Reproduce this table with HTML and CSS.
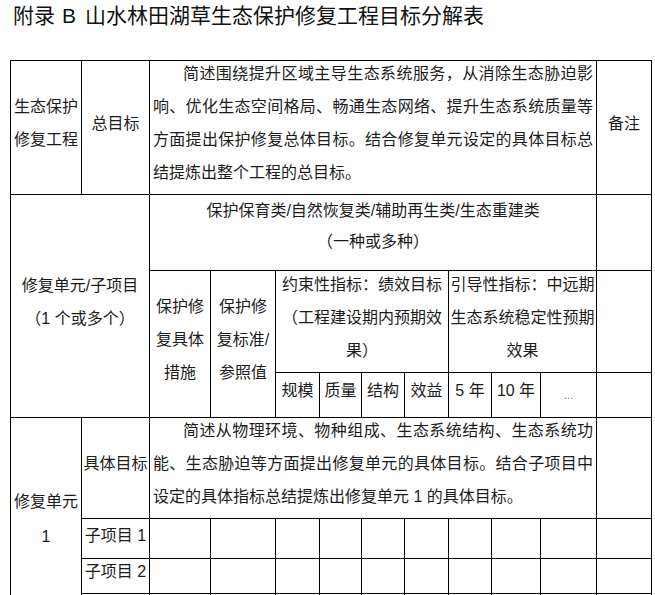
FILE: index.html
```html
<!DOCTYPE html>
<html lang="zh-CN">
<head>
<meta charset="utf-8">
<title>附录 B 山水林田湖草生态保护修复工程目标分解表</title>
<link rel="stylesheet" href="styles.css">
</head>
<body>
<div class="page">
  <h1 class="title">附录<span class="latin">B</span>山水林田湖草生态保护修复工程目标分解表</h1>
  <table class="grid">
    <colgroup>
      <col class="w71"><col class="w68"><col class="w61"><col class="w65">
      <col class="w44"><col class="w42"><col class="w43"><col class="w44">
      <col class="w43"><col class="w49"><col class="w56"><col class="w55">
    </colgroup>
    <tr class="r1">
      <td class="lift">生态保护<br>修复工程</td>
      <td class="lift">总目标</td>
      <td colspan="9" class="para"><div class="in indent">简述围绕提升区域主导生态系统服务，从消除生态胁迫影响、优化生态空间格局、畅通生态网络、提升生态系统质量等方面提出保护修复总体目标。结合修复单元设定的具体目标总结提炼出整个工程的总目标。</div></td>
      <td class="lift">备注</td>
    </tr>
    <tr class="r2">
      <td colspan="2" rowspan="3" class="lift">修复单元/子项目<br>（1 个或多个）</td>
      <td colspan="9" class="top">保护保育类/自然恢复类/辅助再生类/生态重建类<br>（一种或多种）</td>
      <td></td>
    </tr>
    <tr class="r3">
      <td rowspan="2" class="lift">保护修<br>复具体<br>措施</td>
      <td rowspan="2" class="lift">保护修<br>复标准/<br>参照值</td>
      <td colspan="4"><div class="in">约束性指标：绩效目标<br>（工程建设期内预期效<br>果）</div></td>
      <td colspan="3"><div class="in">引导性指标：中远期<br>生态系统稳定性预期<br>效果</div></td>
      <td></td>
    </tr>
    <tr class="r4">
      <td class="lift">规模</td><td class="lift">质量</td><td class="lift">结构</td><td class="lift">效益</td>
      <td class="lift">5 年</td><td class="lift">10 年</td><td class="dots">…</td><td></td>
    </tr>
    <tr class="r5">
      <td rowspan="4" class="lift unit">修复单元<br>1</td>
      <td class="lift">具体目标</td>
      <td colspan="9" class="para"><div class="in indent">简述从物理环境、物种组成、生态系统结构、生态系统功能、生态胁迫等方面提出修复单元的具体目标。结合子项目中设定的具体指标总结提炼出修复单元 1 的具体目标。</div></td>
      <td></td>
    </tr>
    <tr class="r6">
      <td class="sub">子项目 1</td>
      <td></td><td></td><td></td><td></td><td></td><td></td><td></td><td></td><td></td><td></td>
    </tr>
    <tr class="r7">
      <td class="sub">子项目 2</td>
      <td></td><td></td><td></td><td></td><td></td><td></td><td></td><td></td><td></td><td></td>
    </tr>
    <tr class="r8">
      <td></td>
      <td></td><td></td><td></td><td></td><td></td><td></td><td></td><td></td><td></td><td></td>
    </tr>
  </table>
</div>
</body>
</html>
```
FILE: styles.css
```css
html, body {
  margin: 0;
  padding: 0;
  background: #ffffff;
}
body {
  font-family: "Liberation Sans", "Noto Sans CJK SC", sans-serif;
  color: #1c1c1c;
}
.page {
  padding-left: 10px;
}
.title {
  margin: 0;
  height: 60px;
  padding-left: 3px;
  font-size: 21px;
  line-height: 32px;
  font-weight: 400;
  color: #111;
}
.title .latin {
  margin: 0 9px 0 7px;
}
.grid {
  border-collapse: collapse;
  table-layout: fixed;
  width: 641px;
}
.grid td {
  border: 1px solid #000;
  padding: 0;
  font-size: 16px;
  line-height: 33px;
  text-align: center;
  vertical-align: middle;
  white-space: nowrap;
}
.grid td.lift {
  padding-bottom: 9px;
}
.grid td.unit {
  line-height: 35px;
}
.grid td.top {
  vertical-align: top;
  line-height: 31px;
}
.grid td.para {
  white-space: normal;
  text-align: justify;
  padding: 0 3px;
}
.grid .r6 td.sub {
  line-height: 30px;
  padding-bottom: 6px;
}
.grid .r7 td.sub {
  line-height: 26px;
  padding-bottom: 8px;
}
.in {
  margin-top: -9px;
}
.indent {
  text-indent: 30px;
}
.grid td.dots {
  font-size: 10px;
  color: #666;
}
.w71 { width: 71px; }
.w68 { width: 68px; }
.w61 { width: 61px; }
.w65 { width: 65px; }
.w44 { width: 44px; }
.w42 { width: 42px; }
.w43 { width: 43px; }
.w49 { width: 49px; }
.w56 { width: 56px; }
.w55 { width: 55px; }
.r1 { height: 134px; }
.r2 { height: 76px; }
.r3 { height: 102px; }
.r4 { height: 45px; }
.r5 { height: 101px; }
.r6 { height: 40px; }
.r7 { height: 35px; }
.r8 { height: 35px; }
```
